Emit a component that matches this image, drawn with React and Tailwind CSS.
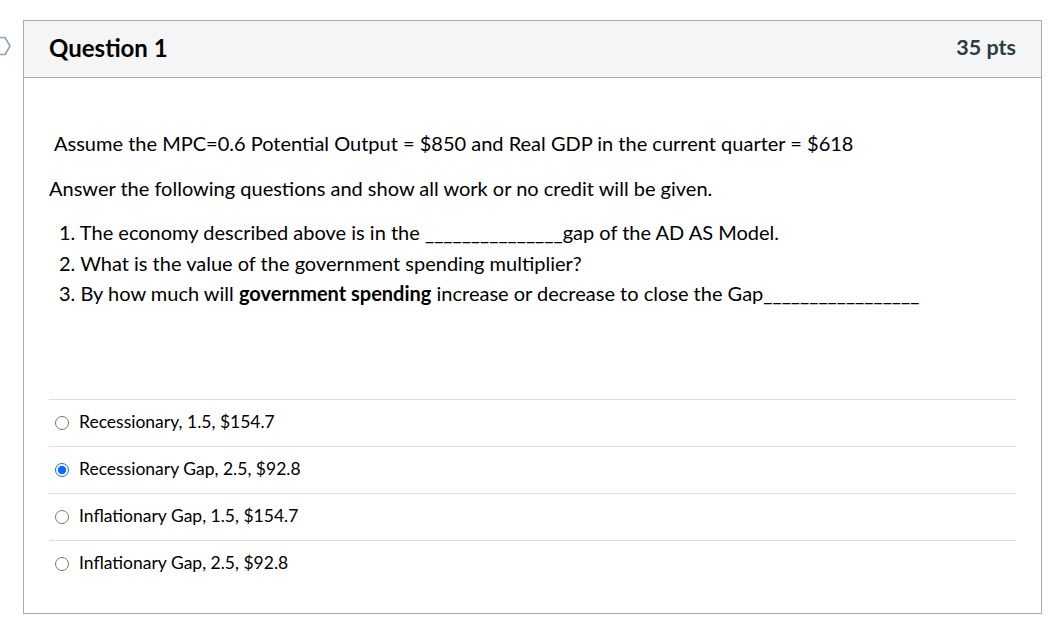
import React from 'react';

const answers = [
  { id: 'a1', label: 'Recessionary, 1.5, $154.7', checked: false },
  { id: 'a2', label: 'Recessionary Gap, 2.5, $92.8', checked: true },
  { id: 'a3', label: 'Inflationary Gap, 1.5, $154.7', checked: false },
  { id: 'a4', label: 'Inflationary Gap, 2.5, $92.8', checked: false },
];

export default function App() {
  return (
    <div className="relative w-[1062px] h-[620px] bg-white pt-[20px] pl-[23px] font-['Lato','Liberation_Sans',sans-serif] text-[#2d3b45]">
      {/* question flag */}
      <svg className="absolute left-0 top-[36px]" width="14" height="20" viewBox="0 0 14 20">
        <path d="M-4 1.5 H5 L10 10 L5 18.5 H-4" fill="none" stroke="#8fa3b8" strokeWidth="1.6" strokeLinejoin="round" />
      </svg>

      <div className="w-[1019px] h-[594px] border border-[#aaaaaa] flex flex-col">
        {/* Header */}
        <div className="h-[57px] shrink-0 bg-[#f5f5f5] border-b border-[#aaaaaa] flex items-center justify-between px-[25px] pb-[3px]">
          <h2 className="text-[24px] font-bold text-black">Question 1</h2>
          <span className="text-[21.5px] font-bold text-[#2d3b45]">35 pts</span>
        </div>

        {/* Body */}
        <div className="px-[25px] pt-[51px] text-[20px] leading-[28px] text-black">
          <p className="ml-[5px]">Assume the MPC=0.6 Potential Output = $850 and Real GDP in the current quarter = $618</p>
          <p className="mt-[17px]">Answer the following questions and show all work or no credit will be given.</p>
          <ol className="mt-[15px] ml-[10px] list-none leading-[30.5px]">
            <li>1. The economy described above is in the _______________gap of the AD AS Model.</li>
            <li>2. What is the value of the government spending multiplier?</li>
            <li>3. By how much will <strong className="font-bold">government spending</strong> increase or decrease to close the Gap_________________</li>
          </ol>
        </div>

        {/* Answers */}
        <div className="mx-[25px] mt-[90px]">
          {answers.map((a) => (
            <label key={a.id} className="h-[47px] border-t border-[#dddddd] flex items-center gap-[10px] pl-[6px] text-[17.5px] text-black">
              <input
                type="radio"
                name="q1"
                defaultChecked={a.checked}
                className="w-[14px] h-[14px] m-0 accent-[#0b6cff]"
              />
              <span>{a.label}</span>
            </label>
          ))}
        </div>
      </div>
    </div>
  );
}
